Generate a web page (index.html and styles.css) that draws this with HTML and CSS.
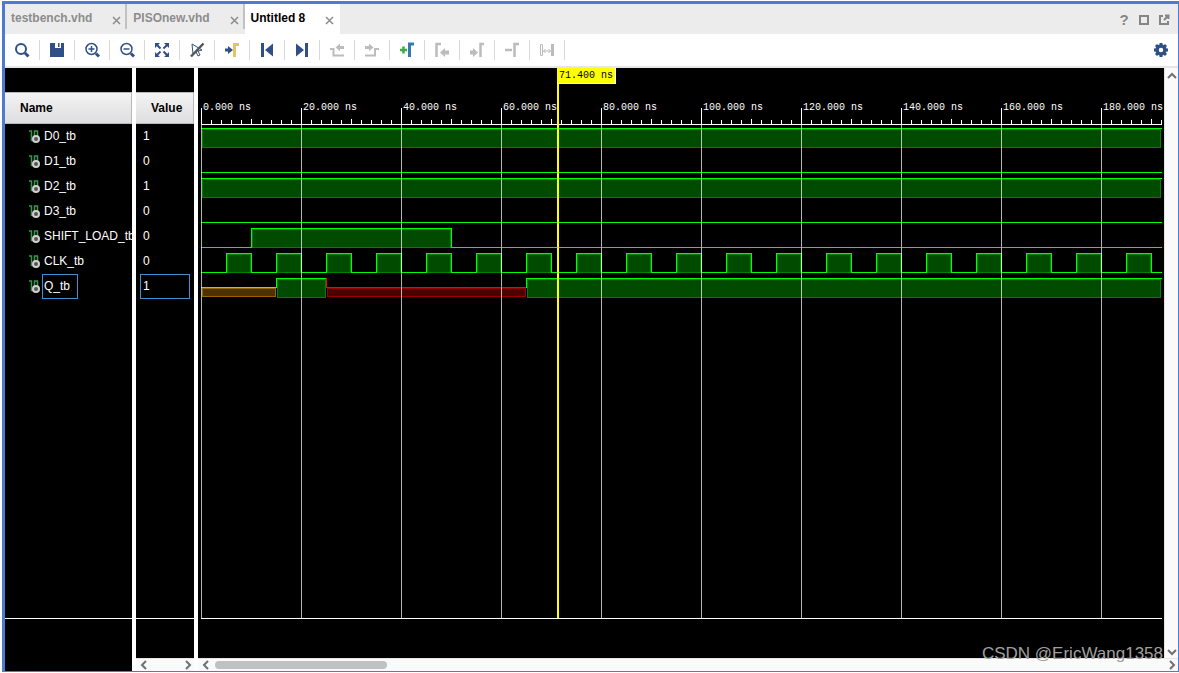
FILE: index.html
```html
<!DOCTYPE html>
<html lang="en">
<head>
<meta charset="utf-8">
<title>Untitled 8</title>
<link rel="stylesheet" href="styles.css">
</head>
<body>
<main class="window">
  <header class="tabbar">
    <nav class="tabs">
      <div class="tab"><a href="#testbench">testbench.vhd</a><button class="close" aria-label="Close testbench.vhd"><svg width="9" height="9" viewBox="0 0 9 9"><path d="M1 1l7 7M8 1L1 8"/></svg></button></div>
      <div class="tab"><a href="#pisonew">PISOnew.vhd</a><button class="close" aria-label="Close PISOnew.vhd"><svg width="9" height="9" viewBox="0 0 9 9"><path d="M1 1l7 7M8 1L1 8"/></svg></button></div>
      <div class="tab active"><a href="#untitled">Untitled 8</a><button class="close" aria-label="Close Untitled 8"><svg width="9" height="9" viewBox="0 0 9 9"><path d="M1 1l7 7M8 1L1 8"/></svg></button></div>
    </nav>
    <div class="panel-tools">
      <button class="help" aria-label="Help">?</button>
      <button aria-label="Maximize"><svg width="12" height="12" viewBox="0 0 12 12"><rect x="2" y="2" width="8" height="8"/></svg></button>
      <button aria-label="Float"><svg width="12" height="12" viewBox="0 0 12 12"><path d="M5 2H2v8h8V7M6 6l4-4M7 1.500h3.500V5"/></svg></button>
    </div>
  </header>

  <div class="toolbar">
    <button aria-label="Search"><svg class="ico" viewBox="0 0 16 16"><circle class="s2" cx="7" cy="7" r="5"/><path class="s3" d="M11 11l3.500 3.500"/></svg></button>
    <button aria-label="Save"><svg class="ico" viewBox="0 0 16 16"><path class="f" d="M1 1h5v5h6V1h3v14H1z"/><path class="f" d="M9 1h1.500v4H9z"/></svg></button>
    <button aria-label="Zoom in"><svg class="ico" viewBox="0 0 16 16"><circle class="s15" cx="7.500" cy="7" r="5.500"/><path class="s15" d="M4.500 7h6M7.500 4v6"/><path class="s3" d="M12 11.500l3 3"/></svg></button>
    <button aria-label="Zoom out"><svg class="ico" viewBox="0 0 16 16"><circle class="s15" cx="7.500" cy="7" r="5.500"/><path class="s15" d="M4.500 7h6"/><path class="s3" d="M12 11.500l3 3"/></svg></button>
    <button aria-label="Zoom fit"><svg class="ico" viewBox="0 0 16 16"><path class="f" d="M1 1h5L1 6zM15 1h-5l5 5zM1 15h5l-5-5zM15 15h-5l5-5z"/><path class="s2" d="M3 3l3.500 3.500M13 3L9.500 6.500M3 13l3.500-3.500M13 13L9.500 9.500"/></svg></button>
    <button aria-label="Zoom to cursor"><svg class="ico" viewBox="0 0 16 16"><path class="s1" d="M3 2l1 10 3-2 2 4 2-1-2-4 4-1z"/><path class="slash" d="M2 14.500L14.500 1.500"/></svg></button>
    <button aria-label="Go to cursor"><svg class="ico" viewBox="0 0 16 16"><path class="f" d="M1 6.500h3V4l5 4-5 4V9.500H1z"/><path class="gold" d="M10.500 15V2.500H15"/></svg></button>
    <button aria-label="Go to time 0"><svg class="ico" viewBox="0 0 16 16"><path class="f" d="M2 1h3v14H2zM14 1.500v13L6 8z"/></svg></button>
    <button aria-label="Go to last time"><svg class="ico" viewBox="0 0 16 16"><path class="f" d="M11 1h3v14h-3zM2 1.500v13L10 8z"/></svg></button>
    <button class="off" aria-label="Previous transition"><svg class="ico" viewBox="0 0 16 16"><path class="s2" d="M1 7h3.500v6.500H15"/><path class="f" d="M15 4h-4V1.500L6.500 5.500 11 9V7h4z"/></svg></button>
    <button class="off" aria-label="Next transition"><svg class="ico" viewBox="0 0 16 16"><path class="s2" d="M1 13.500h10V7h4"/><path class="f" d="M1 4h4V1.500l4.500 4L5 9V7H1z"/></svg></button>
    <button aria-label="Add marker"><svg class="ico" viewBox="0 0 16 16"><path class="plus" d="M1 8h7M4.500 4.500v7"/><path class="marker" d="M10.500 15V2H15"/></svg></button>
    <button class="off" aria-label="Previous marker"><svg class="ico" viewBox="0 0 16 16"><path class="s25" d="M2.500 15V2H7"/><path class="f" d="M15 8.500h-4V6l-5 4.500 5 4.500v-2.500h4z"/></svg></button>
    <button class="off" aria-label="Next marker"><svg class="ico" viewBox="0 0 16 16"><path class="s25" d="M11.500 15V2H15"/><path class="f" d="M1 8.500h3V6l5 4.500L4 15v-2.500H1z"/></svg></button>
    <button class="off" aria-label="Remove marker"><svg class="ico" viewBox="0 0 16 16"><path class="s25" d="M1 8h7M10.500 15V2H15"/></svg></button>
    <button class="off" aria-label="Swap cursors"><svg class="ico" viewBox="0 0 16 16"><path class="s1" d="M1.500 2.500h2v11h-2zM4.500 9h7M6.500 7l-2 2 2 2M9.500 7l2 2-2 2"/><path class="f" d="M12 2h3v12h-3z"/></svg></button>
    <button class="settings" aria-label="Settings"><svg class="ico" viewBox="0 0 16 16"><circle class="gear" cx="8" cy="8" r="4"/><path class="s3" d="M8 1v2M8 13v2M1 8h2M13 8h2M3 3l1.500 1.500M11.500 11.500L13 13M13 3l-1.500 1.500M4.500 11.500L3 13"/></svg></button>
  </div>

  <section class="viewer">
    <div class="column names">
      <div class="heading">Name</div>
      <ul class="rows" id="names"></ul>
      <div class="foot"></div>
    </div>
    <div class="column values">
      <div class="heading">Value</div>
      <ul class="rows" id="values"></ul>
      <div class="foot"></div>
      <div class="hscroll"><button aria-label="Scroll values left"><svg width="8" height="10" viewBox="0 0 8 10"><path d="M6 1L2 5l4 4"/></svg></button><button aria-label="Scroll values right"><svg width="8" height="10" viewBox="0 0 8 10"><path d="M2 1l4 4-4 4"/></svg></button></div>
    </div>
    <div class="wave-area">
      <div class="wave-top">
        <div class="plot" id="plot"><svg id="wave" shape-rendering="crispEdges" role="img" aria-label="Waveform"></svg></div>
        <div class="vscroll"><button aria-label="Scroll up"><svg width="10" height="8" viewBox="0 0 10 8"><path d="M1 6l4-4 4 4"/></svg></button><button aria-label="Scroll down"><svg width="10" height="8" viewBox="0 0 10 8"><path d="M1 2l4 4 4-4"/></svg></button></div>
      </div>
      <div class="hscroll"><button aria-label="Scroll left"><svg width="8" height="10" viewBox="0 0 8 10"><path d="M6 1L2 5l4 4"/></svg></button><div class="track"><div class="thumb"></div></div><button aria-label="Scroll right"><svg width="8" height="10" viewBox="0 0 8 10"><path d="M2 1l4 4-4 4"/></svg></button></div>
      <div class="watermark">CSDN @EricWang1358</div>
    </div>
  </section>
</main>
<script src="wave.js"></script>
</body>
</html>
```

FILE: styles.css
```css
* { box-sizing: border-box; }
body {
  margin: 0;
  background: #fff;
  font: 12px/16px "Liberation Sans", Arial, sans-serif;
  color: #000;
}
button { border: 0; padding: 0; background: none; font: inherit; display: flex; align-items: center; justify-content: center; }
svg { display: block; }
.window {
  height: calc(100vh - 2px);
  margin: 1px 0 0 2px;
  border: 1px solid #4a7dd0;
  border-width: 3px 1px 1px 3px;
  display: flex;
  flex-direction: column;
}
.tabbar { height: 30px; flex: none; background: #ececec; display: flex; justify-content: space-between; }
.tabs { display: flex; align-items: flex-start; }
.tab { display: flex; gap: 20px; height: 25px; padding: 6px 4px 0 6px; border-right: 2px solid #c2c2c2; }
.tab.active { height: 30px; padding-right: 6px; border-right: 0; background: #fff; }
.tab a { color: #8c8c8c; font-weight: bold; text-decoration: none; white-space: nowrap; }
.tab.active a { color: #000; }
.close { height: 20px; }
.close svg { stroke: #8c8c8c; fill: none; stroke-width: 1.5; }
.panel-tools { display: flex; align-items: center; gap: 8px; padding: 2px 8px 0 0; }
.panel-tools svg { fill: none; stroke: #858585; stroke-width: 2; }
.help { width: 12px; font-size: 15px; font-weight: bold; color: #858585; }

.toolbar { height: 34px; flex: none; border-bottom: 2px solid #e6e6e6; display: flex; align-items: center; background: #fff; color: #304f86; }
.toolbar button { width: 35px; height: 20px; border-right: 1px solid #d8d8d8; color: inherit; }
.toolbar button.off { color: #bcbcbc; }
.toolbar .settings { margin-left: auto; border-right: 0; }
.ico { width: 16px; height: 16px; fill: none; }
.ico .f { fill: currentColor; }
.ico .s1 { stroke: currentColor; stroke-width: 1; }
.ico .s15 { stroke: currentColor; stroke-width: 1.5; }
.ico .s2 { stroke: currentColor; stroke-width: 2; }
.ico .s25 { stroke: currentColor; stroke-width: 2.5; }
.ico .s3 { stroke: currentColor; stroke-width: 3; }
.ico .gear { stroke: currentColor; stroke-width: 3.5; }
.ico .slash { stroke: #555; stroke-width: 2.5; }
.ico .gold { stroke: #e0c65c; stroke-width: 3; }
.ico .plus { stroke: #3cac48; stroke-width: 2.5; }
.ico .marker { stroke: #347ab0; stroke-width: 3; }

.viewer { flex: 1; min-height: 0; display: grid; grid-template-columns: 127px 58px minmax(0, 1fr); column-gap: 4px; background: #fff; }
.column { display: flex; flex-direction: column; min-width: 0; padding-top: 24px; background: #000; color: #fff; }
.heading {
  height: 32px;
  flex: none;
  padding: 0 15px;
  border: 1px solid #b8b8b8;
  border-width: 1px 1px 1px 0;
  background: linear-gradient(#f3f3f3, #dedee0);
  color: #000;
  font-weight: bold;
  line-height: 30px;
}
.rows { flex: 1; margin: 0; padding: 0; list-style: none; border-bottom: 1px solid #fff; overflow: hidden; }
.rows li { display: flex; align-items: center; height: 25px; padding-left: 23px; white-space: nowrap; }
.values .rows li { padding: 0 4px; }
.rows span { height: 25px; padding: 0 7px 0 1px; border: 1px solid transparent; line-height: 23px; }
.values .rows span { flex: 1; padding-left: 2px; }
.rows .selected span { border-color: #4091cf; }
.rows svg { flex: none; margin-right: 1px; }
.foot { height: 52px; flex: none; }
.values .foot { height: 39px; }

.wave-area { position: relative; display: flex; flex-direction: column; min-width: 0; min-height: 0; }
.wave-top { flex: 1; min-height: 0; display: flex; }
.plot { flex: 1; min-width: 0; overflow: hidden; background: #000; }
#wave { width: 100%; height: 100%; }
#wave text { font: 10px/12px "Liberation Mono", "Courier New", monospace; }
.vscroll { width: 14px; flex: none; display: flex; flex-direction: column; justify-content: space-between; align-items: flex-end; padding: 4px 1px 2px 0; background: #fafafa; border-left: 1px solid #e4e4e4; }
.hscroll { height: 13px; flex: none; display: flex; align-items: center; justify-content: space-between; padding: 0 2px 0 4px; background: #fafafa; border-top: 1px solid #e4e4e4; }
.hscroll svg, .vscroll svg { fill: none; stroke: #707070; stroke-width: 2; }
.track { flex: 1; padding-left: 5px; }
.thumb { width: 18%; height: 8px; border-radius: 4px; background: #c1c1c1; }
.watermark { position: absolute; right: 15px; bottom: 7px; font-size: 17px; line-height: 20px; color: #a0a0a0; }
```

FILE: wave.js
```js
const signals = [
  { name: "D0_tb", value: "1", wave: [[0, "1"]] },
  { name: "D1_tb", value: "0", wave: [[0, "0"]] },
  { name: "D2_tb", value: "1", wave: [[0, "1"]] },
  { name: "D3_tb", value: "0", wave: [[0, "0"]] },
  { name: "SHIFT_LOAD_tb", value: "0", wave: [[0, "0"], [10, "1"], [50, "0"]] },
  { name: "CLK_tb", value: "0", wave: [], period: 10 },
  { name: "Q_tb", value: "1", wave: [[0, "U"], [15, "1"], [25, "X"], [65, "1"]], selected: true }
];
const SCALE = 5;
const LEFT = 3;
const RULER = 56;
const ROW = 25;
const CURSOR = 71.4;
const STYLE = {
  "1": { line: "#00ff00", edge: "#008000", fill: "#004b00", top: 0 },
  "0": { line: "#00ff00", top: 19 },
  "U": { line: "#ffa500", edge: "#996300", fill: "#4d3200", top: 9 },
  "X": { line: "#ff0000", edge: "#990000", fill: "#4d0000", top: 9 }
};
const ICON = '<svg width="13" height="15" viewBox="0 0 13 15"><path d="M1 2h2.500v10M6.500 12V2h3v7M3.500 11.500h4" fill="none" stroke="#38964c" stroke-width="1.5"/><circle cx="8" cy="10" r="3" fill="#555" stroke="#d0d0d0" stroke-width="2"/></svg>';

function fillRows() {
  const row = (s, icon, text) =>
    `<li class="${s.selected ? "selected" : ""}">${icon}<span>${text}</span></li>`;
  document.getElementById("names").innerHTML = signals.map(s => row(s, ICON, s.name)).join("");
  document.getElementById("values").innerHTML = signals.map(s => row(s, "", s.value)).join("");
}

function rect(x, y, w, h, color, extra = "") {
  return `<rect x="${x}" y="${y}" width="${w}" height="${h}" fill="${color}" ${extra}/>`;
}

function drawSignal(signal, index, end) {
  const top = RULER + 4 + index * ROW;
  let wave = signal.wave;
  if (signal.period) {
    wave = [];
    for (let t = 0; t * SCALE + LEFT < end; t += signal.period / 2) {
      wave.push([t, (t / signal.period) % 1 ? "1" : "0"]);
    }
  }
  let out = "";
  wave.forEach(([time, level], i) => {
    const x = LEFT + time * SCALE;
    const next = i + 1 < wave.length ? LEFT + wave[i + 1][0] * SCALE : end - 1;
    const s = STYLE[level];
    const y = top + s.top;
    if (s.fill) {
      const bottom = top + (s.top ? 19 : 20);
      out += rect(x + 1, y + 1, next - x - 1, bottom - y - 1, s.edge);
      out += rect(x + 2, y + 2, next - x - 3, bottom - y - 3, s.fill);
    }
    out += rect(x, y, next - x + 1, 1, s.line);
    if (i > 0) {
      const before = top + STYLE[wave[i - 1][1]].top;
      out += rect(x, Math.min(before, y), 1, Math.abs(before - y) + 1, s.line);
    }
  });
  return out;
}

function draw() {
  const svg = document.getElementById("wave");
  const box = document.getElementById("plot").getBoundingClientRect();
  const end = Math.floor(box.width) - 2;
  const bottom = Math.floor(box.height) - 40;
  let out = signals.map((s, i) => drawSignal(s, i, end)).join("");
  for (let t = 0; LEFT + t * SCALE < end; t += 2) {
    const x = LEFT + t * SCALE;
    if (t % 20 === 0) {
      out += rect(x, RULER - 16, 1, 16, "#fff");
      out += rect(x, RULER + 1, 1, bottom - RULER - 1, "#fff", 'opacity="0.7"');
      out += `<text x="${x + 2}" y="${RULER - 14}" fill="#fff">${t}.000 ns</text>`;
    } else {
      const h = t % 10 === 0 ? 5 : 4;
      out += rect(x, RULER - h, 1, h, "#fff");
    }
  }
  out += rect(LEFT, RULER, end - LEFT, 1, "#fff");
  out += rect(LEFT, bottom, end - LEFT, 1, "#fff");
  const c = LEFT + CURSOR * SCALE - 1;
  out += rect(c, 0, 2, bottom, "#ffff00");
  out += rect(c, 0, 59, 16, "#fff") + rect(c, 0, 58, 15, "#ffff00");
  out += `<text x="${c + 2}" y="10" fill="#000">71.400 ns</text>`;
  svg.innerHTML = out;
}

fillRows();
draw();
window.addEventListener("resize", draw);
```
